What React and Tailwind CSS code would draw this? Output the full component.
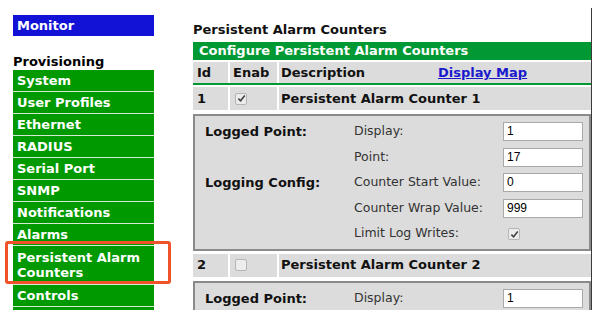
import React from 'react';

const navItems = [
  'System',
  'User Profiles',
  'Ethernet',
  'RADIUS',
  'Serial Port',
  'SNMP',
  'Notifications',
  'Alarms',
  'Persistent Alarm Counters',
  'Controls',
  '',
];

const CheckBox = ({ checked }) => (
  <span className="inline-flex h-[12px] w-[12px] items-center justify-center rounded-[2px] border border-[#b5b5b5] bg-[#ececec]">
    {checked && (
      <svg width="9" height="9" viewBox="0 0 10 10">
        <path d="M1.5 5.2 L4 7.6 L8.6 1.8" fill="none" stroke="#444" strokeWidth="1.8" />
      </svg>
    )}
  </span>
);

const Field = ({ value }) => (
  <div className="h-[19px] w-[80px] border border-[#a9a9a9] bg-white px-[3px] text-[12px] leading-[17px] text-black font-['Liberation_Sans',sans-serif]">
    {value}
  </div>
);

const CounterRow = ({ id, checked }) => (
  <div className="flex h-[23px] items-stretch gap-[2px] text-[13px] font-bold">
    <div className="flex w-[35px] items-center bg-[#dcdcdc] pl-[4px]">{id}</div>
    <div className="flex w-[47px] items-center bg-[#dcdcdc] pl-[5px]">
      <CheckBox checked={checked} />
    </div>
    <div className="flex flex-1 items-center bg-[#dcdcdc] pl-[2px]">Persistent Alarm Counter {id}</div>
  </div>
);

const ConfigPanel = ({ rows }) => (
  <div className="mt-[4px] border-[2px] border-[#8a8a8a] bg-[#dcdcdc] pl-[10px] pt-[3px] pb-[2px]">
    {rows.map((r, i) => (
      <div key={i} className="grid h-[25.5px] grid-cols-[149px_149px_1fr] items-center">
        <div className="text-[13px] font-bold text-[#111]">{r.label}</div>
        <div className="text-[12.5px] text-[#333]">{r.name}</div>
        <div>{r.check ? <span className="pl-[5px]"><CheckBox checked /></span> : <Field value={r.value} />}</div>
      </div>
    ))}
  </div>
);

export default function App() {
  const panel1 = [
    { label: 'Logged Point:', name: 'Display:', value: '1' },
    { label: '', name: 'Point:', value: '17' },
    { label: 'Logging Config:', name: 'Counter Start Value:', value: '0' },
    { label: '', name: 'Counter Wrap Value:', value: '999' },
    { label: '', name: 'Limit Log Writes:', check: true },
  ];
  const panel2 = [{ label: 'Logged Point:', name: 'Display:', value: '1' }];

  return (
    <div className="relative flex h-[316px] w-[600px] overflow-hidden bg-white font-['DejaVu_Sans',Verdana,sans-serif]">
      <div className="h-[310px] w-[141px] shrink-0 ml-[13px] overflow-hidden">
        <div className="mt-[15px] flex h-[21px] items-center bg-[#1212d6] pl-[4px] text-[13px] font-bold text-white">Monitor</div>
        <div className="mt-[18px] h-[15px] text-[13px] font-bold leading-[15px] text-black">Provisioning</div>
        <div className="mt-[1px] flex flex-col">
          {navItems.map((n, i) => (
            <div
              key={i}
              className={`border-b border-[#d4ead4] bg-[#009900] pl-[4px] text-[13px] font-bold text-white ${
                n.length > 20 ? 'h-[39px] pt-[4px] leading-[15px]' : 'h-[22px] leading-[21px]'
              }`}
            >
              {n}
            </div>
          ))}
        </div>
      </div>

      <div className="pointer-events-none absolute left-[5px] top-[241px] h-[43px] w-[166px] rounded-[3px] border-[3px] border-[#f0522a]" />

      <div className="ml-[39px] mt-[8px] h-[302px] w-[399px] shrink-0 overflow-hidden border-r border-[#3a3a3a]">
        <div className="mt-[13px] h-[18px] text-[13px] font-bold leading-[18px] text-[#111]">Persistent Alarm Counters</div>
        <div className="mt-[3px] h-[18px] bg-[#009933] pl-[6px] text-[13px] font-bold leading-[18px] text-white">
          Configure Persistent Alarm Counters
        </div>
        <div className="mt-[2px] flex h-[21px] items-stretch gap-[2px] text-[13px] font-bold text-[#111]">
          <div className="flex w-[35px] items-center bg-[#dcdcdc] pl-[4px]">Id</div>
          <div className="flex w-[47px] items-center bg-[#dcdcdc] pl-[3px]">Enab</div>
          <div className="flex flex-1 items-center bg-[#dcdcdc] pl-[2px]">
            <span className="w-[157px]">Description</span>
            <span className="text-[#1a1acc] underline">Display Map</span>
          </div>
        </div>
        <div className="h-[2px] bg-[#009933]" />
        <div className="mt-[2px] text-[#111]">
          <CounterRow id={1} checked />
        </div>
        <ConfigPanel rows={panel1} />
        <div className="mt-[3px] text-[#111]">
          <CounterRow id={2} checked={false} />
        </div>
        <ConfigPanel rows={panel2} />
      </div>
    </div>
  );
}
